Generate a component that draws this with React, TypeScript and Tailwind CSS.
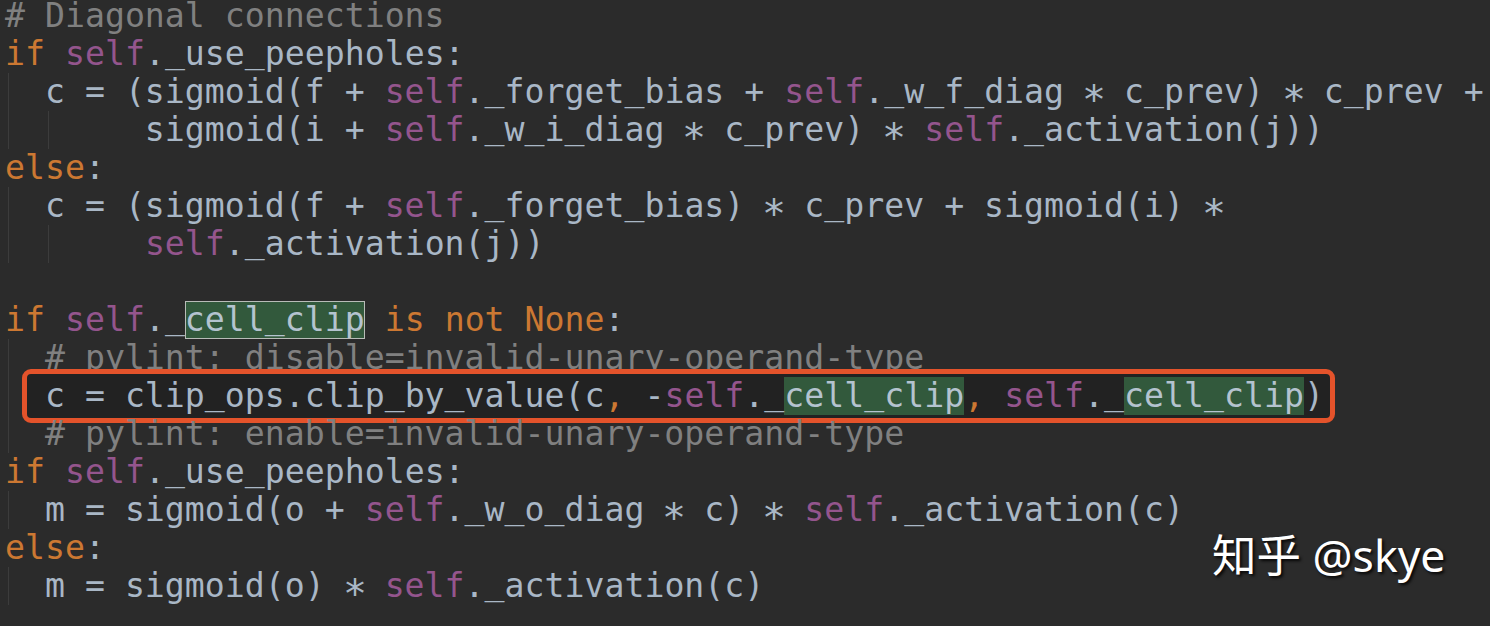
type Kind = "d" | "k" | "s" | "c" | "h" | "hb";
type Tok = [Kind, string];

interface ILine {
  toks: Tok[];
  guides?: number[];
  boxed?: boolean;
}

const tokClass: Record<Kind, string> = {
  d: "text-[#a9b7c6]",
  k: "text-[#cc7832]",
  s: "text-[#94558d]",
  c: "text-[#808080]",
  h: "inline-block text-[#b4c3cf] bg-[#32593c]",
  hb: "inline-block text-[#b4c3cf] bg-[#32593c] outline outline-[1.5px] outline-[#b8bcb8] -outline-offset-[1px]",
};

const guideClass: Record<number, string> = {
  8: "left-[8px]",
  48: "left-[48px]",
};

// Darcula-ish source, one entry per editor row
const lines: ILine[] = [
  { toks: [["c", "# Diagonal connections"]] },
  { toks: [["k", "if"], ["d", " "], ["s", "self"], ["d", "._use_peepholes:"]] },
  {
    guides: [8],
    toks: [
      ["d", "  c = (sigmoid(f + "],
      ["s", "self"],
      ["d", "._forget_bias + "],
      ["s", "self"],
      ["d", "._w_f_diag * c_prev) * c_prev +"],
    ],
  },
  {
    guides: [8, 48],
    toks: [
      ["d", "       sigmoid(i + "],
      ["s", "self"],
      ["d", "._w_i_diag * c_prev) * "],
      ["s", "self"],
      ["d", "._activation(j))"],
    ],
  },
  { toks: [["k", "else"], ["d", ":"]] },
  {
    guides: [8],
    toks: [
      ["d", "  c = (sigmoid(f + "],
      ["s", "self"],
      ["d", "._forget_bias) * c_prev + sigmoid(i) *"],
    ],
  },
  {
    guides: [8, 48],
    toks: [["d", "       "], ["s", "self"], ["d", "._activation(j))"]],
  },
  { toks: [["d", " "]] },
  {
    toks: [
      ["k", "if"],
      ["d", " "],
      ["s", "self"],
      ["d", "._"],
      ["hb", "cell_clip"],
      ["d", " "],
      ["k", "is not None"],
      ["d", ":"],
    ],
  },
  {
    guides: [8],
    toks: [["c", "  # pylint: disable=invalid-unary-operand-type"]],
  },
  {
    guides: [8],
    boxed: true,
    toks: [
      ["d", "  c = clip_ops.clip_by_value(c"],
      ["k", ","],
      ["d", " -"],
      ["s", "self"],
      ["d", "._"],
      ["h", "cell_clip"],
      ["k", ","],
      ["d", " "],
      ["s", "self"],
      ["d", "._"],
      ["h", "cell_clip"],
      ["d", ")"],
    ],
  },
  {
    guides: [8],
    toks: [["c", "  # pylint: enable=invalid-unary-operand-type"]],
  },
  { toks: [["k", "if"], ["d", " "], ["s", "self"], ["d", "._use_peepholes:"]] },
  {
    guides: [8],
    toks: [
      ["d", "  m = sigmoid(o + "],
      ["s", "self"],
      ["d", "._w_o_diag * c) * "],
      ["s", "self"],
      ["d", "._activation(c)"],
    ],
  },
  { toks: [["k", "else"], ["d", ":"]] },
  {
    guides: [8],
    toks: [["d", "  m = sigmoid(o) * "], ["s", "self"], ["d", "._activation(c)"]],
  },
];

// Menlo draws "_" higher and "*" lower than DejaVu does, so nudge those glyphs
function Glyphs({ text }: { text: string }) {
  const parts = text.split(/([_*])/);
  return (
    <>
      {parts.map((p, i) => {
        if (p === "_")
          return (
            <span key={i} className="relative -top-[3px]">
              _
            </span>
          );
        if (p === "*")
          return (
            <span key={i} className="inline-block relative top-[8px] scale-[1.2]">
              *
            </span>
          );
        return p;
      })}
    </>
  );
}

function CodeLine({ line }: { line: ILine }) {
  return (
    <div className="relative h-[38px] whitespace-pre pl-[5px]">
      {line.guides?.map((g) => (
        <span
          key={g}
          className={`absolute top-0 bottom-0 w-px bg-[#3c3c3c] ${guideClass[g]}`}
        />
      ))}
      {line.boxed && (
        <span className="absolute left-[22px] top-[-8px] w-[1313px] h-[54px] rounded-[9px] border-[5px] border-[#e4532b] bg-[#222222]" />
      )}
      <span className="relative">
        {line.toks.map(([kind, text], i) => (
          <span key={i} className={tokClass[kind]}>
            <Glyphs text={text} />
          </span>
        ))}
      </span>
    </div>
  );
}

export default function App() {
  return (
    <div className="relative w-[1490px] h-[626px] overflow-hidden bg-[#2b2b2b]">
      <div className="flex flex-col -mt-[3px] font-['DejaVu_Sans_Mono',monospace] text-[33.2px] leading-[38px]">
        {lines.map((line, i) => (
          <CodeLine key={i} line={line} />
        ))}
      </div>
      {/* watermark */}
      <div className="absolute left-[1212px] top-[527px] font-['Noto_Sans','Noto_Sans_CJK_SC',sans-serif] text-[44.5px] leading-[56px] text-white [text-shadow:2px_2px_3px_rgba(0,0,0,0.85)]">
        知乎 @skye
      </div>
    </div>
  );
}
